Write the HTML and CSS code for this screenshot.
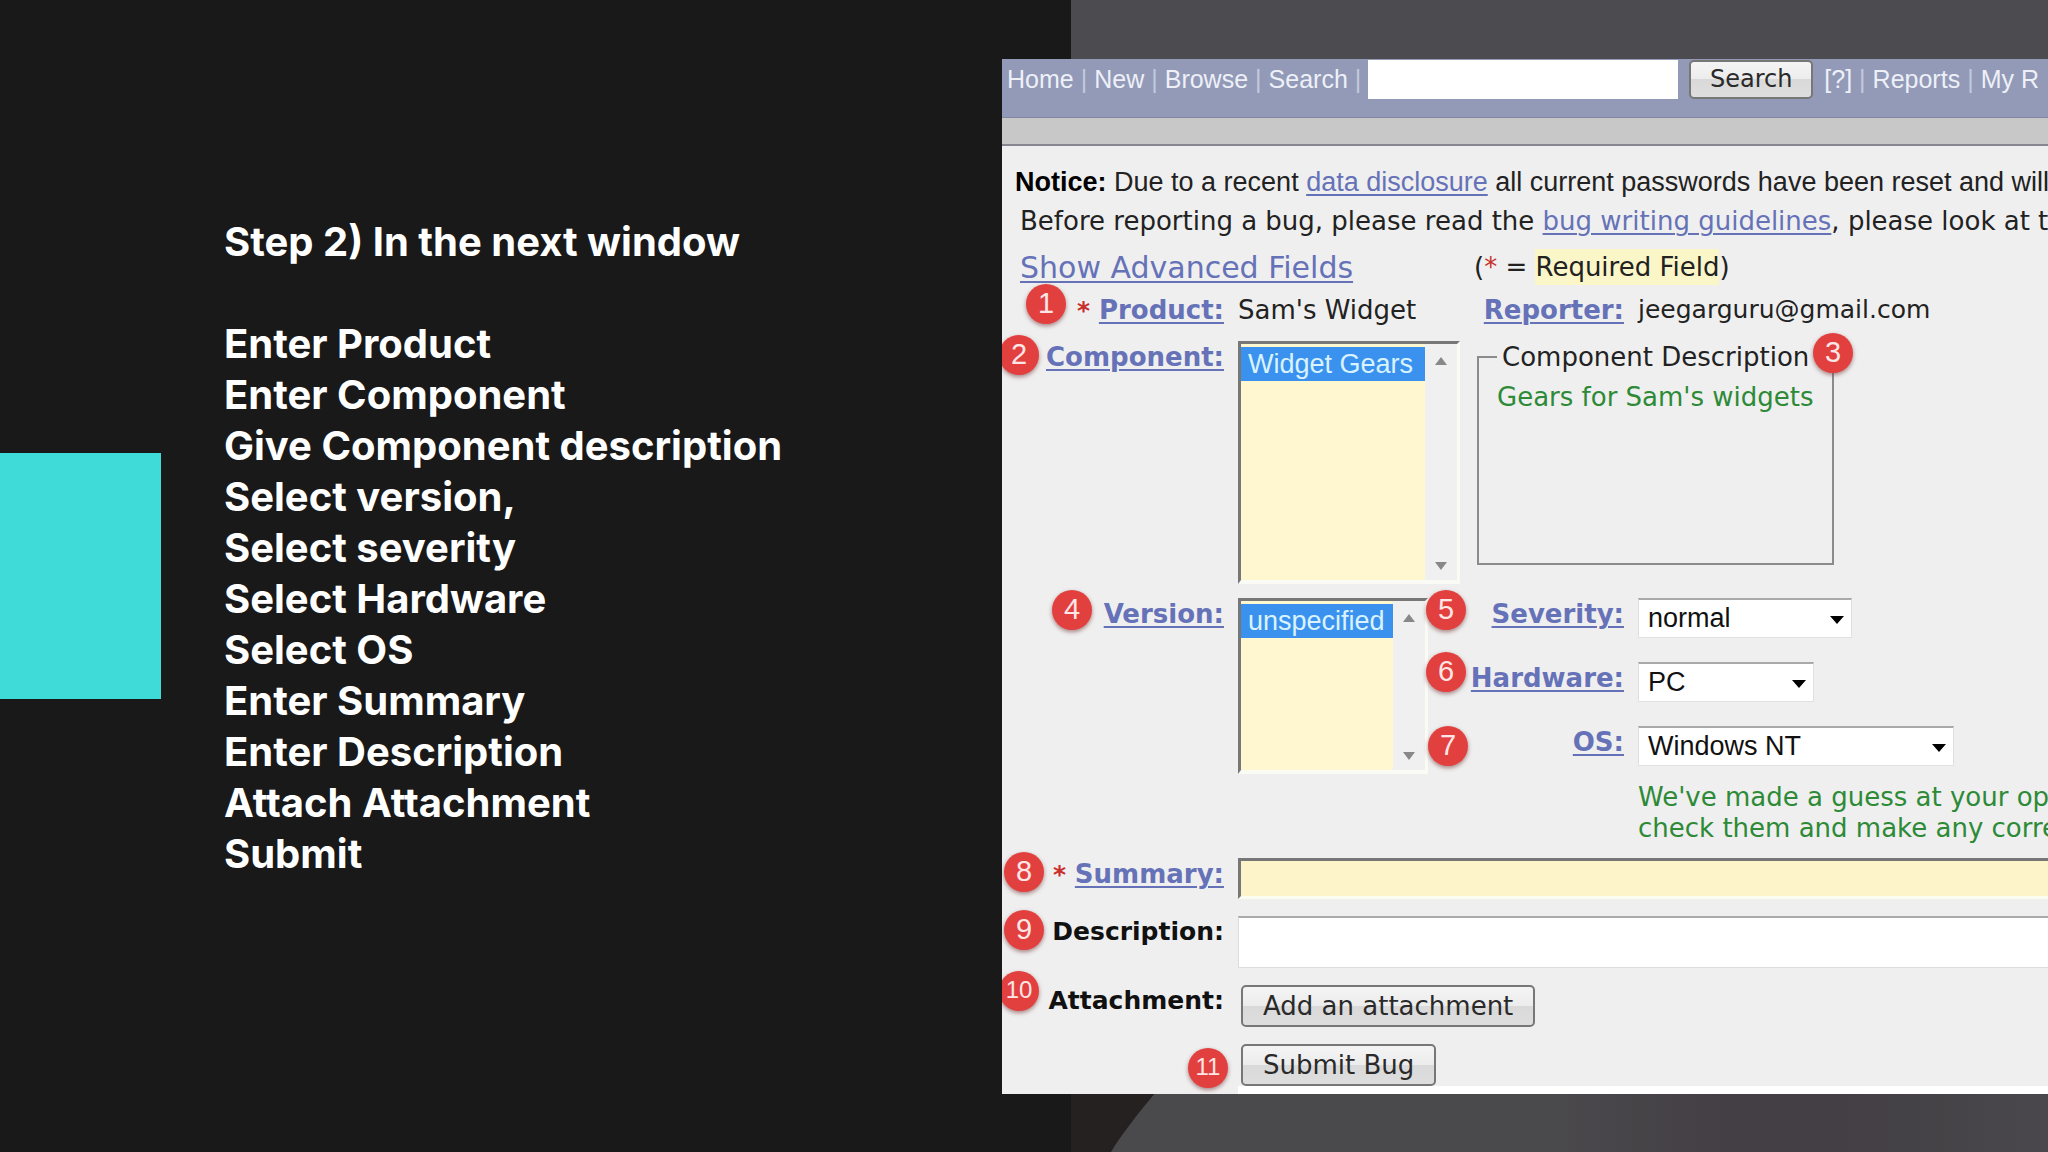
FILE: index.html
```html
<!DOCTYPE html>
<html lang="en">
<head>
<meta charset="utf-8">
<title>Step 2 - Report a bug</title>
<link rel="stylesheet" href="styles.css">
</head>
<body>
<main class="slide">
  <svg class="backdrop" viewBox="0 0 84 59" aria-hidden="true"><path d="M0 0H84C66 22 50 42 40 59H0Z" fill="#252121"/></svg>
  <section class="steps">
    <div class="accent"></div>
    <div class="steps-text">
      <h1>Step 2) In the next window</h1>
      <ul>
        <li>Enter Product</li>
        <li>Enter Component</li>
        <li>Give Component description</li>
        <li>Select version,</li>
        <li>Select severity</li>
        <li>Select Hardware</li>
        <li>Select OS</li>
        <li>Enter Summary</li>
        <li>Enter Description</li>
        <li>Attach Attachment</li>
        <li>Submit</li>
      </ul>
    </div>
  </section>

  <section class="panel">
    <nav class="topbar">
      <a href="#">Home</a><i>|</i>
      <a href="#">New</a><i>|</i>
      <a href="#">Browse</a><i>|</i>
      <a href="#">Search</a><i>|</i>
      <input class="search-box" type="text" aria-label="Search bugs">
      <button class="btn search-btn" type="button">Search</button>
      <a href="#">[?]</a><i>|</i>
      <a href="#">Reports</a><i>|</i>
      <a href="#">My R</a>
    </nav>
    <div class="band"></div>

    <div class="intro">
      <p class="notice"><b>Notice:</b> Due to a recent <a href="#">data disclosure</a> all current passwords have been reset and will</p>
      <p class="before">Before reporting a bug, please read the <a href="#">bug writing guidelines</a>, please look at th</p>
    </div>

    <form class="bug-form">
      <div class="row legend-row">
        <a class="advanced" href="#">Show Advanced Fields</a>
        <p class="required-note">(<span class="star">*</span> = <mark>Required Field</mark>)</p>
      </div>

      <div class="row">
        <p class="label"><span class="star">*</span> <a href="#">Product:</a></p>
        <p>Sam's Widget</p>
        <p class="label"><a href="#">Reporter:</a></p>
        <p class="email">jeegarguru@gmail.com</p>
      </div>

      <div class="row">
        <label class="label" for="component"><a href="#">Component:</a></label>
        <div class="listbox listbox-component">
          <select id="component" size="7"><option selected>Widget Gears</option></select>
          <div class="scroll"><span class="up"></span><span class="down"></span></div>
        </div>
        <fieldset>
          <legend>Component Description</legend>
          <p class="hint">Gears for Sam's widgets</p>
        </fieldset>
      </div>

      <div class="row">
        <label class="label" for="version"><a href="#">Version:</a></label>
        <div class="listbox listbox-version">
          <select id="version" size="5"><option selected>unspecified</option></select>
          <div class="scroll"><span class="up"></span><span class="down"></span></div>
        </div>
        <div class="environment">
          <div class="choices">
            <label class="label" for="severity"><a href="#">Severity:</a></label>
            <span class="drop drop-severity"><select id="severity"><option>normal</option></select></span>
            <label class="label" for="hardware"><a href="#">Hardware:</a></label>
            <span class="drop drop-hardware"><select id="hardware"><option>PC</option></select></span>
            <label class="label" for="os"><a href="#">OS:</a></label>
            <span class="drop drop-os"><select id="os"><option>Windows NT</option></select></span>
          </div>
          <p class="hint guess">We've made a guess at your op<br>check them and make any corre</p>
        </div>
      </div>

      <div class="details">
        <label class="label" for="summary"><span class="star">*</span> <a href="#">Summary:</a></label>
        <input class="summary" id="summary" type="text">
        <label class="label" for="description">Description:</label>
        <textarea class="description" id="description"></textarea>
        <label class="label" for="attach">Attachment:</label>
        <button class="btn form-btn" id="attach" type="button">Add an attachment</button>
        <button class="btn form-btn submit" type="button">Submit Bug</button>
      </div>
    </form>
    <div class="strip"></div>

    <span class="badge b1">1</span>
    <span class="badge b2">2</span>
    <span class="badge b3">3</span>
    <span class="badge b4">4</span>
    <span class="badge b5">5</span>
    <span class="badge b6">6</span>
    <span class="badge b7">7</span>
    <span class="badge b8">8</span>
    <span class="badge b9">9</span>
    <span class="badge wide b10">10</span>
    <span class="badge wide b11">11</span>
  </section>
</main>
</body>
</html>
```
FILE: styles.css
```css
* { box-sizing: border-box; }

body { margin: 0; background: #191919; }
h1, ul, p, fieldset { margin: 0; padding: 0; }

.slide {
  position: relative;
  display: grid;
  grid-template-columns: minmax(0, 1002fr) minmax(0, 1046fr);
  align-items: center;
  min-height: 100vh;
  overflow: hidden;
  background:
    linear-gradient(90deg, #191919 52.3%, transparent 52.3%),
    linear-gradient(90deg, #4a494c 76%, #443f45 84%, #433f44 90%, #4a484c) bottom / 100% 120px no-repeat,
    #4c4b4f;
}

.backdrop {
  position: absolute;
  left: 52.3%;
  bottom: 0;
  width: 84px;
  height: 59px;
}

/* Left: instructions */
.steps {
  display: grid;
  grid-template-columns: 161px 1fr;
  column-gap: 63px;
  align-items: center;
}
.accent { height: 246px; background: #3fdbd9; }
.steps-text {
  padding-bottom: 57px;
  color: #fff;
  font: 700 40px/51px Inter, "Liberation Sans", sans-serif;
}
.steps-text h1 { margin-bottom: 51px; font: inherit; }
.steps-text ul { list-style: none; }

/* Right: bug report form */
.panel {
  position: relative;
  overflow: hidden;
  background: #efefef;
  color: #222;
  font: 26px/32px "DejaVu Sans", Verdana, sans-serif;
}

.topbar {
  display: flex;
  gap: 7px;
  height: 59px;
  padding: 1px 0 0 5px;
  border-bottom: 1px solid #7f87a3;
  background: #929ab7;
  color: #eef0f8;
  font: 25px/39px "Liberation Sans", Arial, sans-serif;
  white-space: nowrap;
}
.topbar a { color: inherit; text-decoration: none; }
.topbar i { color: #c3c9dc; font-style: normal; }
.search-box {
  flex: 0 0 310px;
  min-width: 0;
  height: 39px;
  padding: 0;
  border: 0;
  background: #fff;
  font: inherit;
}
.btn {
  border: 2px solid #777;
  border-radius: 5px;
  background: linear-gradient(#f4f4f4, #ececec 50%, #d9d9d9 50%, #dedede);
  color: #2a2a2a;
  font: 26px/32px "DejaVu Sans", Verdana, sans-serif;
}
.search-btn {
  flex: 0 0 124px;
  height: 39px;
  margin: 0 4px;
  padding: 0;
  font-size: 24px;
}

.band { height: 28px; border-bottom: 2px solid #868790; background: #c8c8c8; }

.intro { padding: 17px 0 0 13px; line-height: 39px; white-space: nowrap; }
.notice { font: 27px/39px "Liberation Sans", Arial, sans-serif; }
.notice b { color: #000; }
.before { padding-left: 5px; }

.panel p a, .label a, .advanced { color: #6672b8; text-decoration: underline; text-underline-offset: 3px; text-decoration-thickness: 2px; }

.bug-form { display: grid; row-gap: 14px; }
.row {
  display: grid;
  grid-template-columns: 222px 222px 150px minmax(0, 1fr);
  column-gap: 14px;
  align-items: start;
  white-space: nowrap;
}
.legend-row { margin-bottom: -14px; line-height: 53px; }
.advanced { grid-column: 1 / 3; padding-left: 18px; font-size: 30px; }
.required-note { grid-column: 3 / -1; }
mark { padding: 3px 0; background: #fbf6c8; color: inherit; }
.star { color: #c9302c; font-weight: bold; }
.required-note .star { font-weight: normal; }

.label { justify-self: end; color: #111; font-size: 25px; font-weight: bold; white-space: nowrap; }
.label a { font-size: 26px; }
.email { font-size: 25px; }
.hint { color: #2d8a36; }

.listbox {
  display: flex;
  border: 3px solid #fbfbf6;
  border-top-color: #777;
  border-left-color: #777;
  border-bottom-width: 4px;
}
.listbox-component { height: 243px; }
.listbox-version { width: 190px; height: 176px; }
.listbox select {
  flex: 1;
  min-width: 0;
  padding: 3px 0 0;
  border: 0;
  outline: 0;
  overflow: hidden;
  background: #fef7cf;
  font: 27px/33px "Liberation Sans", Arial, sans-serif;
}
.listbox option { height: 34px; min-height: 34px; padding: 2px 0 0 7px; }
.listbox option:checked { background: linear-gradient(#3a92ee, #3a92ee); color: #d9f2ff; }
.scroll {
  display: flex;
  flex: 0 0 32px;
  flex-direction: column;
  justify-content: space-between;
  align-items: center;
  padding: 13px 0 10px;
  background: #f0f0f0;
}
.up, .down { border: 6px solid transparent; border-top-width: 0; border-bottom: 8px solid #888; }
.down { border-top: 8px solid #888; border-bottom: 0; }

fieldset {
  grid-column: 3 / -1;
  width: 357px;
  height: 224px;
  margin-left: 3px;
  padding: 8px 0 0 18px;
  border: 2px solid #8b8b8b;
}
legend { padding: 0 5px; }

.environment { grid-column: 3 / -1; display: grid; row-gap: 16px; }
.choices {
  display: grid;
  grid-template-columns: 150px minmax(0, 1fr);
  gap: 24px 14px;
}
.drop { position: relative; display: block; height: 40px; }
.drop-severity { width: 214px; }
.drop-hardware { width: 176px; }
.drop-os { width: 316px; }
.drop select {
  width: 100%;
  height: 40px;
  padding: 0 0 0 9px;
  border: 1px solid #e0e0e0;
  border-top: 2px solid #a9a9a9;
  border-radius: 0;
  appearance: none;
  background: #fff;
  color: #111;
  font: 27px/36px "Liberation Sans", Arial, sans-serif;
}
.drop::after {
  content: "";
  position: absolute;
  right: 8px;
  top: 18px;
  border: 7px solid transparent;
  border-top: 8px solid #000;
  border-bottom: 0;
}
.guess { padding-left: 164px; line-height: 31px; }

.details {
  display: grid;
  grid-template-columns: 222px minmax(0, 1fr);
  gap: 17px 14px;
  align-items: start;
}
.summary {
  height: 41px;
  border: 3px solid #777;
  border-right: 0;
  border-bottom: 3px solid #fbfdf0;
  background: #fdf5c9;
  font: inherit;
}
.description {
  height: 52px;
  border: 1px solid #ddd;
  border-top: 2px solid #aaa;
  border-right: 0;
  background: #fff;
  resize: none;
  font: inherit;
}
.form-btn { justify-self: start; height: 42px; margin-left: 3px; padding: 0 20px; }
.submit { grid-column: 2; }
.strip { height: 8px; margin-left: 236px; background: #fff; }

/* Numbered callouts over the form */
.badge {
  position: absolute;
  width: 40px;
  height: 40px;
  border-radius: 50%;
  background: #e2403f;
  box-shadow: 0 2px 4px rgba(120, 60, 60, .6);
  color: #ffe6e6;
  font: 29px/38px "Liberation Sans", Arial, sans-serif;
  text-align: center;
}
.wide { font-size: 24px; }
.b1 { left: 24px; top: 225px; }
.b2 { left: -3px; top: 276px; }
.b3 { left: 811px; top: 274px; }
.b4 { left: 50px; top: 531px; }
.b5 { left: 424px; top: 531px; }
.b6 { left: 424px; top: 593px; }
.b7 { left: 426px; top: 667px; }
.b8 { left: 2px; top: 793px; }
.b9 { left: 2px; top: 851px; }
.b10 { left: -3px; top: 912px; }
.b11 { left: 186px; top: 989px; }
```
